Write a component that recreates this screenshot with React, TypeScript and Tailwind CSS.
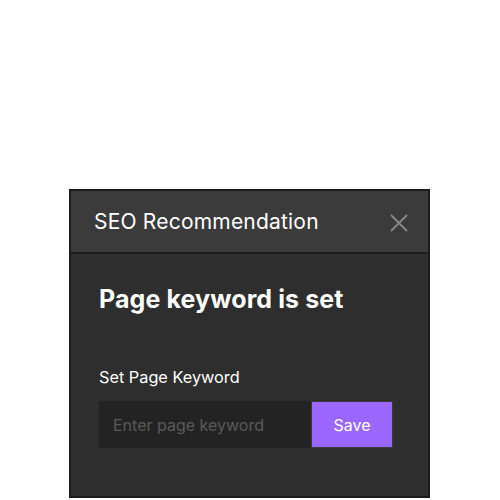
import React from "react";

export default function App() {
  return (
    <div className="w-[500px] h-[500px] bg-white overflow-hidden" style={{ fontFamily: "Inter, 'Noto Sans', sans-serif" }}>
      <div className="ml-[69px] mt-[189px] w-[361px] h-[309px] border-2 border-[#1c1c1c] bg-[#2e2e2e] flex flex-col">
        <div className="h-[63px] shrink-0 bg-[#3b3b3b] border-b-2 border-[#1f1f1f] flex items-center justify-between pl-[23px] pr-[20px]">
          <span className="text-[21px] leading-[28px] text-white tracking-[0.2px]">SEO Recommendation</span>
          <svg width="18" height="18" viewBox="0 0 18 18" className="mt-[2px]">
            <path d="M1 1 L17 17 M17 1 L1 17" stroke="#8a8a8a" strokeWidth="1.8" fill="none" />
          </svg>
        </div>
        <div className="pl-[28px] pt-[29px]">
          <h1 className="text-[25px] leading-[32px] font-bold text-white tracking-[0.1px]">Page keyword is set</h1>
          <div className="mt-[50px] text-[16.3px] leading-[24px] text-white">Set Page Keyword</div>
          <div className="mt-[12px] flex h-[47px] w-[295px]">
            <input
              className="w-[212px] shrink-0 h-[47px] bg-[#232323] px-[14px] text-[16px] text-white placeholder:text-[#5a5a5a] outline-none"
              placeholder="Enter page keyword"
            />
            <button className="w-[82px] shrink-0 h-[47px] bg-[#9b66fe] text-white text-[16px] border border-[#3a3a3a]">Save</button>
          </div>
        </div>
      </div>
    </div>
  );
}
